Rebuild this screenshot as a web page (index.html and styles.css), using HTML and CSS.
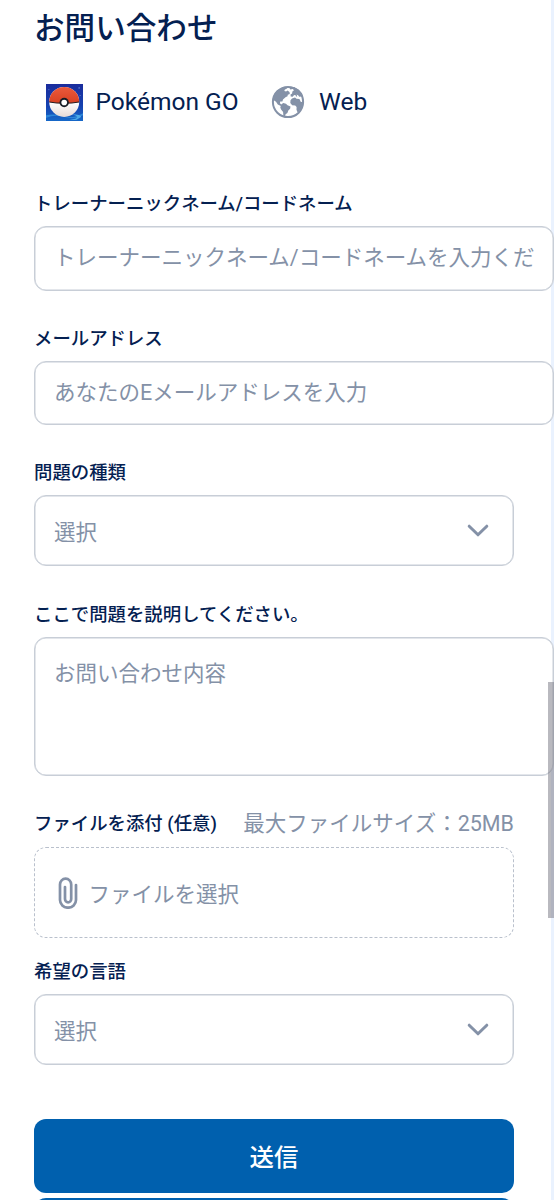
FILE: index.html
```html
<!DOCTYPE html>
<html lang="ja">
<head>
<meta charset="utf-8">
<title>お問い合わせ</title>
<link rel="stylesheet" href="styles.css">
</head>
<body>
<div class="page">
  <main class="content">
    <h1 class="title">お問い合わせ</h1>
    <div class="source">
      <svg class="app-icon" viewBox="0 0 38 38">
        <defs>
          <linearGradient id="sky" x1="0" y1="0" x2="0" y2="1"><stop offset="0" stop-color="#1a2c9c"/><stop offset=".6" stop-color="#1542b0"/><stop offset="1" stop-color="#1668c8"/></linearGradient>
          <linearGradient id="red" x1="0" y1="0" x2="0" y2="1"><stop offset="0" stop-color="#ea5a3c"/><stop offset="1" stop-color="#d84022"/></linearGradient>
          <linearGradient id="white" x1="0" y1="0" x2="0" y2="1"><stop offset=".5" stop-color="#fff"/><stop offset="1" stop-color="#e6d9d6"/></linearGradient>
        </defs>
        <rect width="38" height="38" fill="url(#sky)"/>
        <path d="M0 32q9-2 18 1t20-3v2q-9 5-19 2T0 35z" fill="#2c86d8"/>
        <path d="M24 37q8-1 8-3t-7-3q12 0 11 3l-5 3z" fill="#4aa8e6"/>
        <circle cx="3" cy="6" r=".5" fill="#8db8ff"/><circle cx="34" cy="4" r=".6" fill="#8db8ff"/><circle cx="35" cy="12" r=".4" fill="#fff"/>
        <circle cx="18.7" cy="18.4" r="15.4" fill="url(#white)"/>
        <path d="M3.3 18.4a15.4 15.4 0 0 1 30.8 0q-15.4 2.6-30.8 0z" fill="url(#red)"/>
        <path d="M3.3 18q15.4 2.4 30.8 0v1.1q-15.4 2.6-30.8 0z" fill="#24191d"/>
        <circle cx="18.7" cy="19" r="4.8" fill="#171c25"/><circle cx="18.7" cy="19" r="2.9" fill="#fff"/>
      </svg>
      <span class="app-name">Pokémon GO</span>
      <svg class="globe" viewBox="0 0 34 34">
        <circle cx="17" cy="17" r="15.1" fill="#fff" stroke="#8491a7" stroke-width="2"/>
        <g fill="#8491a7">
          <path d="M13 2.3C8 3.6 4 7.2 2.4 12l.4 3.2 2.2 1.6 1.8 2.6 3 1.5.8-1.2-1.7-1.5.3-1.6 2.2-.2.6-2 2.5-2.2 2-1 .3-1.5 2-.8-.3-2-2-1.3-1.4.9-1.8-.5.6-1.6 2.5-.8z"/>
          <path d="M10.2 19.5l2-1.4 2.8.6 1.5 1.6 3 1.1-.4 2.4-1.8 1.6-.9 2.6-1.8 1.2-.6 2.3-1.6-.2-.3-4.4-2-2.4-.8-2z"/>
          <path d="M18 2l1.3 2.5 2.5-.5 1.2 1.2-1.6 1.4-.3 2-1.6 1 .2 2 2 .1 1.4-1.8 1.5.4.9 1.4.7-.5-.7-1.7 1.6.7 1.2 1.6 2.5-.2 1.5.8-1.2-3.8-3.5-4.2-4.5-2.4z"/>
          <path d="M21 13.6l3-1 1.5 1.2 2.9.3 1.5 3 2.2-.4-.7 5-3.5 5-1.4.6-1-2.5.1-2.8-1.4-1.6-3-.2-1.9-2.2.2-2.8z"/>
        </g>
      </svg>
      <span class="app-name">Web</span>
    </div>

    <section class="field">
      <div class="label">トレーナーニックネーム/コードネーム</div>
      <div class="control input">トレーナーニックネーム/コードネームを入力くだ</div>
    </section>
    <section class="field">
      <div class="label">メールアドレス</div>
      <div class="control input">あなたのEメールアドレスを入力</div>
    </section>
    <section class="field">
      <div class="label">問題の種類</div>
      <div class="control select"><span>選択</span>
        <svg class="chevron" viewBox="0 0 22 14"><path d="M2.2 2.2L11 10.8l8.8-8.6"/></svg>
      </div>
    </section>
    <section class="field">
      <div class="label">ここで問題を説明してください。</div>
      <div class="control textarea">お問い合わせ内容</div>
    </section>
    <section class="field field-file">
      <div class="label label-row"><span>ファイルを添付 (任意)</span><span class="hint">最大ファイルサイズ：25MB</span></div>
      <div class="control file">
        <svg class="clip" viewBox="0 0 20 32"><path d="M18 8v15a8 7.7 0 0 1-16 0V7.5a5.6 5.8 0 0 1 11.2 0V22a3.1 3.4 0 0 1-6.2 0V10"/></svg>
        <span>ファイルを選択</span>
      </div>
    </section>
    <section class="field field-language">
      <div class="label">希望の言語</div>
      <div class="control select"><span>選択</span>
        <svg class="chevron" viewBox="0 0 22 14"><path d="M2.2 2.2L11 10.8l8.8-8.6"/></svg>
      </div>
    </section>
    <div class="submit">送信</div>
    <div class="next-button"></div>
  </main>
  <div class="scrollbar"></div>
</div>
</body>
</html>
```
FILE: styles.css
```css
* { box-sizing: border-box; }
body {
  margin: 0;
  color: #042051;
  font-family: Roboto, "Noto Sans CJK JP", sans-serif;
}
.page {
  position: relative;
  width: 554px;
  height: 1200px;
  overflow: hidden;
  background: linear-gradient(to right, #fff 551px, #eaf2fe 551px);
}
.content { width: 514px; padding: 9px 0 0 34px; }
.title {
  margin: 0;
  height: 40px;
  font-size: 30.6px;
  line-height: 40px;
  font-weight: 500;
}
.source {
  display: flex;
  align-items: center;
  height: 38px;
  margin-top: 34px;
  margin-bottom: 69px;
  padding-left: 12px;
}
.app-icon { width: 37px; height: 37px; margin-right: 12.5px; }
.app-name { font-size: 24.5px; line-height: 38px; white-space: nowrap; }
.globe { width: 34px; height: 34px; margin: 0 14px 0 32.5px; }
.field { margin-bottom: 34.2px; }
.label {
  height: 26px;
  margin-bottom: 10px;
  font-size: 18.4px;
  line-height: 27px;
  font-weight: 500;
  white-space: nowrap;
}
.label-row { display: flex; justify-content: space-between; margin-bottom: 11px; }
.hint { color: #8491a7; font-size: 21.5px; font-weight: 400; }
.control {
  border: 1px solid #c8ced7;
  border-radius: 12px;
  box-shadow: inset 0 0 0 .5px #c8ced7;
  color: #8491a7;
  font-size: 21.5px;
  white-space: nowrap;
}
.input {
  width: 520px;
  height: 64.5px;
  padding: 0 19px;
  line-height: 61px;
  background: #fff;
}
.select {
  display: flex;
  align-items: center;
  justify-content: space-between;
  height: 71px;
  padding: 0 24px 0 19px;
}
.select span { padding-bottom: 1px; }
.chevron { width: 22px; height: 14px; }
.chevron path {
  fill: none;
  stroke: #8491a7;
  stroke-width: 3;
  stroke-linecap: round;
  stroke-linejoin: round;
}
.textarea {
  width: 520px;
  height: 139.5px;
  padding: 20px 19px;
  line-height: 32px;
  background: #fff;
}
.file {
  display: flex;
  align-items: center;
  height: 91px;
  padding-left: 22.5px;
  gap: 11px;
  border-style: dashed;
  box-shadow: none;
  border-color: #b9c0cc;
}
.file span { padding-bottom: 1px; }
.clip { width: 20px; height: 32px; }
.clip path { fill: none; stroke: #8491a7; stroke-width: 2.7; stroke-linecap: round; }
.field-file { margin-bottom: 20px; }
.field-language { margin-bottom: 54px; }
.submit {
  height: 74px;
  padding-top: 2px;
  border-radius: 12px;
  background: #0060ae;
  color: #fff;
  font-size: 24.4px;
  line-height: 74px;
  font-weight: 500;
  text-align: center;
}
.next-button {
  height: 74px;
  margin-top: 5px;
  border-radius: 12px;
  background: #0060ae;
}
.scrollbar {
  position: absolute;
  top: 682px;
  right: 0;
  width: 6px;
  height: 236px;
  background: rgba(128, 128, 138, .55);
}
```
